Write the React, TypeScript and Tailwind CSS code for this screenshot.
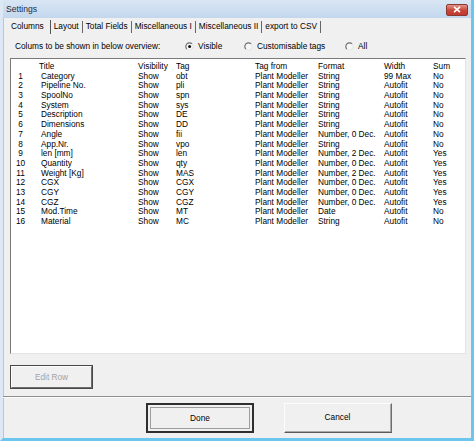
import React from "react";

const rows: [string, string, string, string, string, string, string, string][] = [
  ["1", "Category", "Show", "obt", "Plant Modeller", "String", "99 Max", "No"],
  ["2", "Pipeline No.", "Show", "pli", "Plant Modeller", "String", "Autofit", "No"],
  ["3", "SpoolNo", "Show", "spn", "Plant Modeller", "String", "Autofit", "No"],
  ["4", "System", "Show", "sys", "Plant Modeller", "String", "Autofit", "No"],
  ["5", "Description", "Show", "DE", "Plant Modeller", "String", "Autofit", "No"],
  ["6", "Dimensions", "Show", "DD", "Plant Modeller", "String", "Autofit", "No"],
  ["7", "Angle", "Show", "fii", "Plant Modeller", "Number, 0 Dec.", "Autofit", "No"],
  ["8", "App.Nr.", "Show", "vpo", "Plant Modeller", "String", "Autofit", "No"],
  ["9", "len [mm]", "Show", "len", "Plant Modeller", "Number, 2 Dec.", "Autofit", "Yes"],
  ["10", "Quantity", "Show", "qty", "Plant Modeller", "Number, 0 Dec.", "Autofit", "Yes"],
  ["11", "Weight [Kg]", "Show", "MAS", "Plant Modeller", "Number, 2 Dec.", "Autofit", "Yes"],
  ["12", "CGX", "Show", "CGX", "Plant Modeller", "Number, 0 Dec.", "Autofit", "Yes"],
  ["13", "CGY", "Show", "CGY", "Plant Modeller", "Number, 0 Dec.", "Autofit", "Yes"],
  ["14", "CGZ", "Show", "CGZ", "Plant Modeller", "Number, 0 Dec.", "Autofit", "Yes"],
  ["15", "Mod.Time", "Show", "MT", "Plant Modeller", "Date", "Autofit", "No"],
  ["16", "Material", "Show", "MC", "Plant Modeller", "String", "Autofit", "No"],
];

function Radio({ checked }: { checked?: boolean }) {
  return (
    <svg width="9" height="9" viewBox="0 0 9 9" className="shrink-0">
      <circle cx="4.5" cy="4.5" r="3.6" fill="#f7f7f7" />
      <path d="M1.9 7.1 A3.6 3.6 0 0 1 7.1 1.9" stroke="#6f6f6f" strokeWidth="1.2" fill="none" />
      <path d="M7.1 1.9 A3.6 3.6 0 0 1 1.9 7.1" stroke="#e4e4e4" strokeWidth="1" fill="none" />
      {checked && <circle cx="4.6" cy="4.6" r="1.5" fill="#111" />}
    </svg>
  );
}

const tabs = ["Layout", "Total Fields", "Miscellaneous I", "Miscellaneous II", "export to CSV"];

export default function App() {
  const font = { fontFamily: '"Liberation Sans", Arial, sans-serif' };
  return (
    <div
      className="w-[474px] h-[441px] flex flex-col bg-[#f0f0f0] text-black overflow-hidden border-l-[3px] border-l-[#dce8f5] border-r-[3px] border-r-[#6cc6ee] border-b-[3px] border-b-[#6cc6ee]"
      style={font}
    >
      {/* Title bar */}
      <div className="h-[18px] shrink-0 flex items-center justify-between bg-gradient-to-b from-[#d9e6f4] to-[#c3d7ed] pl-[3px] pr-[3px] -ml-[3px]">
        <span className="text-[8.6px] text-[#1b2a3b] pl-[3px]">Settings</span>
        <div className="w-[22px] h-[12px] mt-[1px] rounded-[2px] border border-[#8a3a33] bg-gradient-to-b from-[#e3958a] via-[#c9473b] to-[#c0392d] flex items-center justify-center">
          <svg width="8" height="7" viewBox="0 0 8 7">
            <path d="M1 0.8 L7 6.2 M7 0.8 L1 6.2" stroke="#fff" strokeWidth="1.6" />
          </svg>
        </div>
      </div>

      <div className="flex-1 flex flex-col border-l border-l-[#b7c7d8]">
        {/* Tabs */}
        <div className="h-[16px] flex items-end text-[8.3px] leading-[13px] pl-[4px]">
          <div className="flex items-center pt-[2px]">
            <span className="px-[3px] pb-[1px]">Columns</span>
            <span className="w-[1px] h-[14px] bg-[#555] ml-[3px]" />
          </div>
          {tabs.map((t) => (
            <div key={t} className="flex items-center">
              <span className="pl-[3px] pr-[3px] pb-[1px]">{t}</span>
              <span className="w-[1px] h-[12px] bg-[#666]" />
            </div>
          ))}
        </div>

        {/* Radio row */}
        <div className="h-[22px] flex items-center text-[8.3px] mt-[1px]">
          <span className="ml-[11px] w-[170px]">Colums to be shown in below overview:</span>
          <div className="flex items-center gap-[4px] w-[59px]">
            <Radio checked />
            <span>Visible</span>
          </div>
          <div className="flex items-center gap-[4px] w-[101px]">
            <Radio />
            <span>Customisable tags</span>
          </div>
          <div className="flex items-center gap-[4px]">
            <Radio />
            <span>All</span>
          </div>
        </div>

        {/* List */}
        <div className="ml-[6px] mr-[5px] h-[296px] mt-[1px] bg-white border-t border-l border-t-[#7a7a7a] border-l-[#7a7a7a] border-b border-r border-b-[#e3e3e3] border-r-[#e3e3e3] pt-[3px] text-[8.3px]">
          <div className="grid grid-cols-[29px_98px_38px_79px_63px_66px_49px_1fr] h-[9.7px] leading-[9.7px]">
            <span />
            <span className="-ml-[1px]">Title</span>
            <span>Visibility</span>
            <span>Tag</span>
            <span>Tag from</span>
            <span>Format</span>
            <span>Width</span>
            <span>Sum</span>
          </div>
          {rows.map((r) => (
            <div
              key={r[0]}
              className="grid grid-cols-[29px_98px_38px_79px_63px_66px_49px_1fr] h-[9.7px] leading-[9.7px] whitespace-nowrap"
            >
              <span className="text-center pr-[10px]">{r[0]}</span>
              <span className="pl-[1px]">{r[1]}</span>
              <span>{r[2]}</span>
              <span>{r[3]}</span>
              <span>{r[4]}</span>
              <span>{r[5]}</span>
              <span>{r[6]}</span>
              <span>{r[7]}</span>
            </div>
          ))}
        </div>

        {/* Edit Row */}
        <div className="mt-[11px] ml-[6px]">
          <div className="w-[83px] h-[24px] border border-[#474747] flex">
            <div className="flex-1 border-b border-r border-b-[#6e6e6e] border-r-[#6e6e6e] border-t border-l border-t-[#fdfdfd] border-l-[#fdfdfd] flex items-center justify-center text-[8.3px] text-[#a3a3a3]">
              Edit Row
            </div>
          </div>
        </div>

        {/* Separator */}
        <div className="mt-[7px] h-[2px] border-t border-t-[#8e8e8e] border-b border-b-[#fcfcfc] -ml-[1px]" />

        {/* Buttons */}
        <div className="mt-[5px] flex text-[8.3px]">
          <div className="ml-[142px] w-[108px] h-[30px] border-2 border-[#2e2e2e] p-[2px] flex">
            <div className="flex-1 border border-[#9d9d9d] flex items-center justify-center">Done</div>
          </div>
          <div className="ml-[30px] w-[108px] h-[30px] border border-t-[#fcfcfc] border-l-[#fcfcfc] border-r-[#6e6e6e] border-b-[#5a5a5a] flex">
            <div className="flex-1 border-r border-b border-r-[#a9a9a9] border-b-[#a9a9a9] flex items-center justify-center">
              Cancel
            </div>
          </div>
        </div>
      </div>
    </div>
  );
}
